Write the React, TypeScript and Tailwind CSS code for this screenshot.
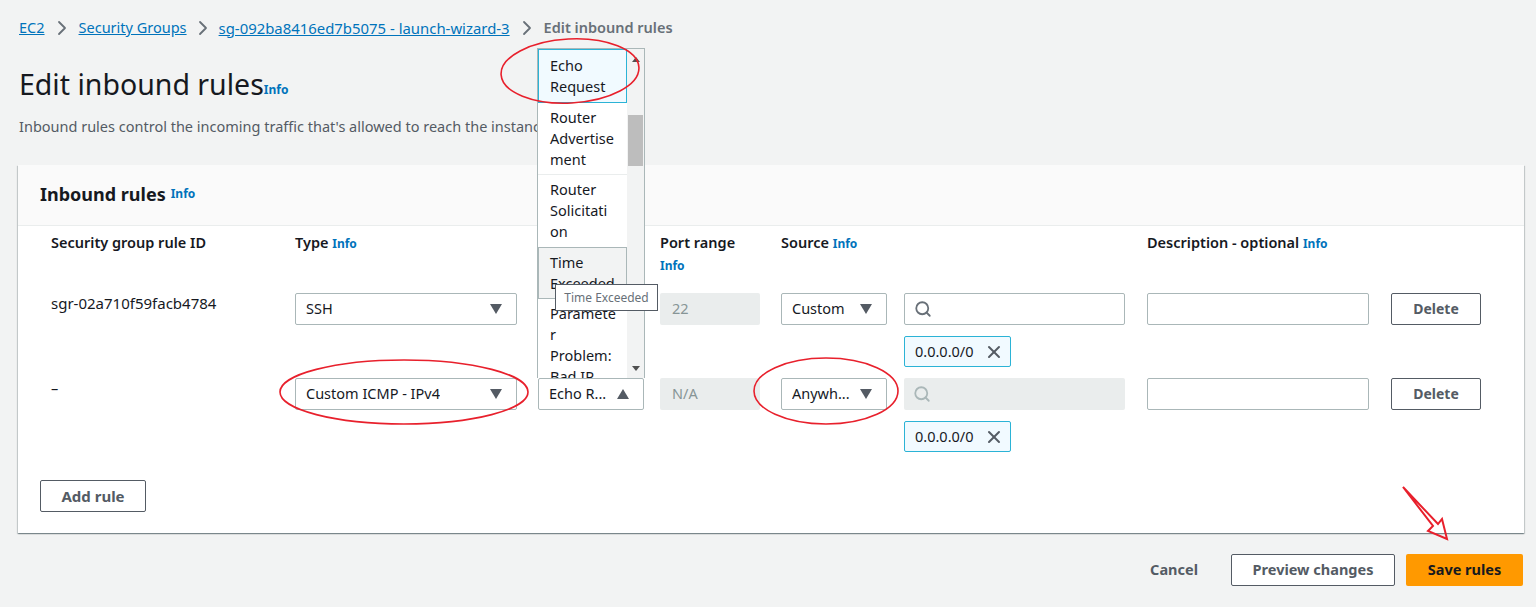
import React from 'react';
import { ChevronRight, Search, X } from 'lucide-react';

const rowGrid = 'grid grid-cols-[244px_243px_122px_121px_123px_243px_244px_90px] pl-[33px]';

const Info = ({ className = '' }: { className?: string }) => (
  <a className={`text-[12px] font-bold text-[#0073bb] ${className}`}>Info</a>
);

const Caret = ({ up = false }: { up?: boolean }) => (
  <svg width="12" height="10" viewBox="0 0 12 10" className="shrink-0">
    <path d={up ? 'M6 0 L12 10 L0 10 Z' : 'M0 0 L12 0 L6 10 Z'} fill="#545b64" />
  </svg>
);

const Select = ({ label, width, up }: { label: string; width: string; up?: boolean }) => (
  <div className={`flex h-[32px] items-center justify-between rounded-[2px] border border-[#aab7b8] bg-white pl-[10px] pr-[14px] text-[#16191f] ${width}`}>
    <span className="truncate">{label}</span>
    <Caret up={up} />
  </div>
);

const Disabled = ({ label }: { label: string }) => (
  <div className="flex h-[32px] w-[100px] items-center rounded-[2px] bg-[#eaeded] pl-[12px] text-[#879596]">{label}</div>
);

const SearchBox = ({ disabled = false }: { disabled?: boolean }) => (
  <div className={`flex h-[32px] w-[221px] items-center rounded-[2px] pl-[9px] ${disabled ? 'bg-[#eaeded]' : 'border border-[#aab7b8] bg-white'}`}>
    <Search size={18} strokeWidth={2.4} color={disabled ? '#aab7b8' : '#687078'} />
  </div>
);

const Token = () => (
  <div className="mt-[11px] flex h-[31px] w-[107px] items-center justify-between rounded-[2px] border border-[#2bb3d6] bg-[#f1faff] pl-[10px] pr-[6px] text-[#16191f]">
    <span>0.0.0.0/0</span>
    <X size={20} strokeWidth={2.4} color="#545b64" />
  </div>
);

const TextBox = () => <div className="h-[32px] w-[222px] rounded-[2px] border border-[#aab7b8] bg-white" />;

const DeleteButton = () => (
  <div className="flex h-[32px] w-[90px] items-center justify-center rounded-[2px] border border-[#545b64] bg-white pb-[2px] text-[14px] font-bold text-[#545b64]">Delete</div>
);

const ProtocolList = () => (
  <div className="absolute bottom-full left-[-1px] flex h-[330px] w-[108px] overflow-hidden border border-[#aab7b8] border-b-0 bg-[#f2f3f3] text-[#16191f] leading-[21px]">
    <div className="w-[89px] shrink-0 bg-white">
      <div className="h-[54px] border border-[#2bb3d6] bg-[#f1faff] pl-[11px] pt-[5px]">Echo<br />Request</div>
      <div className="h-[72px] border-b border-[#eaeded] pl-[12px] pt-[4px]">Router<br />Advertise<br />ment</div>
      <div className="h-[72px] pl-[12px] pt-[4px]">Router<br />Solicitati<br />on</div>
      <div className="h-[52px] border border-[#aab7b8] bg-[#f2f3f3] pl-[11px] pt-[4px]">Time<br />Exceeded</div>
      <div className="pl-[12px] pt-[4px]">Paramete<br />r<br />Problem:<br />Bad IP</div>
    </div>
    <div className="relative flex-1">
      <div className="absolute left-[1px] top-[66px] h-[51px] w-[15px] bg-[#bdbdbd]" />
      <svg width="8" height="5" viewBox="0 0 8 5" className="absolute left-[5px] top-[8px]"><path d="M4 0 L8 5 L0 5 Z" fill="#505050" /></svg>
      <svg width="8" height="5" viewBox="0 0 8 5" className="absolute left-[5px] bottom-[7px]"><path d="M0 0 L8 0 L4 5 Z" fill="#505050" /></svg>
    </div>
  </div>
);

const Tooltip = () => (
  <div className="absolute top-[-94px] left-[17px] z-10 flex h-[27px] w-[103px] items-center justify-center border border-[#545b64] bg-white text-[12px] text-[#687078]">Time Exceeded</div>
);

// red marks drawn on top of the screenshot
const Annotations = () => (
  <svg width="1536" height="607" viewBox="0 0 1536 607" className="pointer-events-none absolute left-0 top-0 z-20">
    <g fill="none" stroke="#e8202c" strokeWidth="1.6">
      <ellipse cx="570" cy="71" rx="69" ry="32" transform="rotate(-3 570 71)" />
      <ellipse cx="404" cy="392" rx="124" ry="32" />
      <ellipse cx="826" cy="391" rx="72" ry="33" />
      <path d="M1403 487 L1433 526 L1428 531 L1447 539 L1442 519 L1438 524 Z" strokeWidth="2" />
    </g>
  </svg>
);

export default function App() {
  return (
    <div className="relative h-[607px] w-[1536px] overflow-hidden bg-[#f2f3f3] font-['Noto_Sans','Liberation_Sans',sans-serif] text-[14.5px] text-[#16191f]">
      <Annotations />

      <div className="flex h-[56px] items-center pl-[19px] text-[#0073bb]">
        <a className="underline">EC2</a>
        <ChevronRight size={24} strokeWidth={1.8} color="#687078" className="mx-[5px]" />
        <a className="underline">Security Groups</a>
        <ChevronRight size={24} strokeWidth={1.8} color="#687078" className="mx-[4px]" />
        <a className="text-[14.9px] underline">sg-092ba8416ed7b5075 - launch-wizard-3</a>
        <ChevronRight size={24} strokeWidth={1.8} color="#687078" className="mx-[5px]" />
        <span className="font-semibold text-[#687078]">Edit inbound rules</span>
      </div>

      <div className="flex h-[48px] items-end pl-[19px]">
        <h1 className="text-[28.5px] leading-[40px] text-[#16191f]">Edit inbound rules</h1>
        <Info className="mb-[5px]" />
      </div>
      <p className="mt-[12px] pl-[19px] leading-[20px] text-[#545b64]">Inbound rules control the incoming traffic that's allowed to reach the instance.</p>

      <section className="ml-[18px] mr-[12px] mt-[29px] h-[368px] bg-white shadow-[0_1px_1px_0_rgba(0,28,36,0.3),1px_1px_1px_0_rgba(0,28,36,0.15),-1px_1px_1px_0_rgba(0,28,36,0.15)]">
        <div className="flex h-[61px] items-center gap-[5px] border-b border-[#eaeded] bg-[#fafafa] pb-[2px] pl-[22px]">
          <h2 className="text-[18px] font-bold">Inbound rules</h2>
          <Info />
        </div>

        <div className={`${rowGrid} h-[67px] pt-[5px] font-semibold leading-[22px]`}>
          <div>Security group rule ID</div>
          <div>Type <Info /></div>
          <div />
          <div>Port range<br /><Info /></div>
          <div className="col-span-2">Source <Info /></div>
          <div className="col-span-2">Description - optional <Info /></div>
        </div>

        <div className={`${rowGrid} h-[85px]`}>
          <div className="-mt-[1px] text-[15px]">sgr-02a710f59facb4784</div>
          <Select label="SSH" width="w-[222px]" />
          <div />
          <Disabled label="22" />
          <Select label="Custom" width="w-[106px]" />
          <div>
            <SearchBox />
            <Token />
          </div>
          <TextBox />
          <DeleteButton />
        </div>

        <div className={`${rowGrid} h-[102px]`}>
          <div>–</div>
          <Select label="Custom ICMP - IPv4" width="w-[222px]" />
          <div className="relative">
            <ProtocolList />
            <Tooltip />
            <Select label="Echo R..." width="w-[106px]" up />
          </div>
          <Disabled label="N/A" />
          <Select label="Anywh..." width="w-[106px]" />
          <div>
            <SearchBox disabled />
            <Token />
          </div>
          <TextBox />
          <DeleteButton />
        </div>

        <div className="pl-[22px]">
          <div className="flex h-[32px] w-[106px] items-center justify-center rounded-[2px] border border-[#545b64] bg-white text-[15px] font-bold text-[#545b64]">Add rule</div>
        </div>
      </section>

      <div className="mt-[21px] flex items-center justify-end pr-[13px] font-bold">
        <span className="mr-[33px] text-[#545b64]">Cancel</span>
        <div className="mr-[11px] flex h-[32px] w-[164px] items-center justify-center rounded-[2px] border border-[#545b64] bg-white text-[#545b64]">Preview changes</div>
        <div className="flex h-[32px] w-[117px] items-center justify-center rounded-[2px] bg-[#ff9900] text-[#16191f]">Save rules</div>
      </div>
    </div>
  );
}
